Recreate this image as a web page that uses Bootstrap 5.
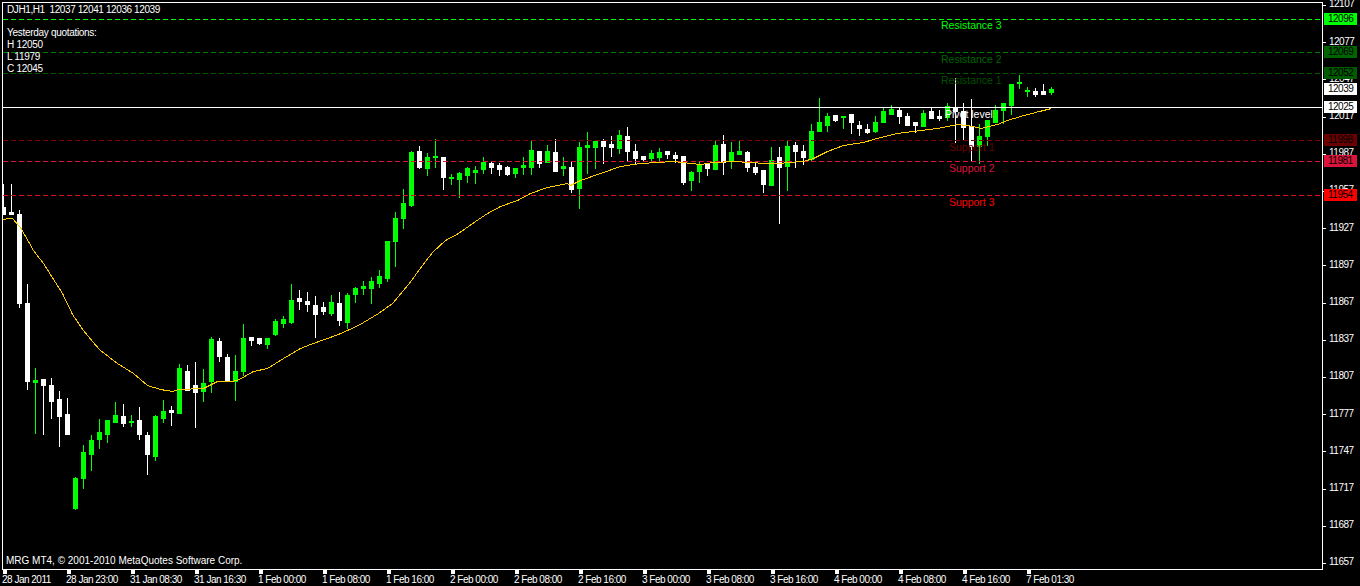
<!DOCTYPE html>
<html lang="en">
<head>
<meta charset="utf-8">
<title>DJH1,H1</title>
<link href="https://cdn.jsdelivr.net/npm/bootstrap@5.3.0/dist/css/bootstrap.min.css" rel="stylesheet">
<style>
html,body{background:#000;overflow:hidden}
body{font-family:"Liberation Sans",Arial,sans-serif;font-size:10px;line-height:12px;color:#fff}
.terminal{width:1360px;height:586px;padding:2px 0 0 2px}
.plot{width:1321px;height:568px;border:1px solid #fff;flex:none}
.plot svg{display:block;shape-rendering:crispEdges}
.plot text{font:10.5px "Liberation Sans",Arial,sans-serif;shape-rendering:auto}
.info{top:0;left:4px;letter-spacing:-.3px}
.info div{height:12px}
.info .title{margin-bottom:11px;margin-top:1px;white-space:pre;letter-spacing:-.4px}
.copy{left:3px;bottom:2px}
.price-axis{width:37px;height:568px;flex:none;letter-spacing:-.5px}
.price-axis .tick{left:0;width:3px;height:1px;background:#fff}
.price-axis .lab{left:6px;height:12px}
.price-axis .box{left:1px;width:33px;height:12px;padding-left:4px;color:#000}
.time-axis{height:16px;letter-spacing:-.5px}
.time-axis .cell{width:64px;flex:none;white-space:nowrap}
.time-axis .mark{width:1px;height:4px;background:#fff;margin-left:1px}
</style>
</head>
<body class="m-0">
<div class="terminal d-flex flex-column">
  <div class="d-flex">
    <div class="plot position-relative" id="plot">
      <div class="info position-absolute">
        <div class="title">DJH1,H1  12037 12041 12036 12039</div>
        <div>Yesterday quotations:</div>
        <div>H 12050</div>
        <div>L 11979</div>
        <div>C 12045</div>
      </div>
      <div class="copy position-absolute">MRG MT4, © 2001-2010 MetaQuotes Software Corp.</div>
    </div>
    <div class="price-axis position-relative" id="axis"></div>
  </div>
  <div class="time-axis d-flex" id="time"></div>
</div>
<script>
// [green?, high, bodyTop, bodyBottom, low]; bars every 8px from x=3
var bars=[
[0,184,207,214,214],[0,184,212,214,214],[0,210,214,303,307],[0,284,303,381,389],
[1,368,380,382,433],[0,379,379,385,434],[0,378,385,401,418],[0,391,399,416,446],[0,398,414,434,434],
[1,477,478,508,509],[1,445,452,478,488],[1,435,440,454,470],[1,419,432,439,448],[1,420,420,434,442],
[1,402,415,422,422],[0,404,416,423,426],[1,415,421,422,426],[0,407,420,434,439],[0,432,435,454,474],
[1,415,416,456,460],[1,400,411,418,422],[0,406,410,412,425],[1,364,368,413,413],[0,365,371,390,390],
[0,362,385,392,427],[1,369,383,391,401],[1,337,339,381,392],[0,338,341,356,361],[0,354,357,381,381],
[1,355,371,381,400],[1,324,338,371,375],[0,337,337,340,345],[0,338,338,343,344],[1,338,338,344,348],
[1,319,321,334,335],[1,316,319,323,327],[1,284,300,322,323],[0,290,298,301,309],[0,292,301,304,311],
[0,296,305,314,337],[0,302,307,311,314],[1,295,302,313,315],[0,292,303,320,325],[1,293,295,322,328],
[1,287,288,294,302],[1,281,286,288,294],[1,277,281,288,303],[1,270,276,283,287],[1,241,241,278,281],
[1,212,218,241,266],[1,189,203,218,228],[1,151,152,205,206],[0,146,151,167,168],[1,153,157,168,175],
[1,139,156,157,167],[0,157,157,177,189],[1,174,177,178,184],[1,172,173,179,197],[1,167,168,175,182],
[1,166,170,172,183],[1,157,162,169,173],[0,161,163,167,173],[0,163,165,169,175],[0,166,167,174,175],
[1,168,168,173,177],[1,157,165,167,174],[1,141,150,167,174],[0,151,151,163,167],[1,145,151,162,162],
[0,139,152,171,171],[1,157,166,168,175],[0,162,167,189,192],[1,142,147,188,208],[1,132,145,147,173],
[1,141,141,147,168],[0,139,141,146,163],[0,136,144,147,156],[1,130,135,148,153],[0,127,136,151,161],
[0,144,151,158,164],[0,156,156,159,161],[1,150,153,158,162],[1,148,152,157,162],[0,151,151,154,158],
[0,152,155,158,162],[0,156,156,182,184],[1,171,172,180,190],[1,162,165,171,182],[0,163,164,168,175],
[1,141,145,169,169],[0,135,144,162,174],[1,142,152,161,168],[1,141,151,154,154],[0,151,152,167,171],
[0,163,167,172,174],[0,170,170,184,192],[1,147,160,185,185],[0,147,157,167,223],[1,140,146,166,190],
[0,142,145,151,167],[0,145,151,157,164],[1,124,131,159,161],[1,98,122,131,131],[1,113,116,125,131],
[0,115,115,120,121],[1,116,116,117,128],[0,114,114,122,133],[0,121,125,128,135],[0,124,129,132,133],
[1,116,122,131,132],[1,108,111,122,122],[1,105,109,114,114],[0,108,110,116,123],[0,113,116,125,125],
[0,122,122,125,132],[1,110,113,126,126],[0,108,111,118,118],[0,110,116,118,120],[1,103,106,117,120],
[0,78,107,111,142],[0,103,111,127,140],[0,99,126,146,161],[1,124,136,146,163],[1,120,120,136,145],
[1,105,110,122,122],[1,103,103,110,123],[1,84,84,105,114],[1,75,82,83,88],[1,87,90,91,96],
[0,88,91,94,96],[0,84,91,94,94],[1,87,89,92,94]
];
var ma=[[3,219],[8,218],[12,218],[20,227],[33,250],[43,263],[62,293],[72,314],[83,330],[92,341],[100,350],[117,363],[133,373],[147,385],[160,389],[172,391],[178,389],[203,388],[217,381],[230,381],[237,380],[253,371],[267,368],[283,358],[300,348],[310,344],[327,338],[338,334],[358,325],[378,313],[392,303],[408,284],[422,265],[432,252],[445,240],[458,233],[475,221],[487,213],[500,206],[517,200],[530,193],[547,187],[567,183],[570,185],[580,180],[600,173],[620,166],[640,163],[673,161],[700,164],[713,162],[735,161],[747,162],[767,163],[780,163],[787,162],[803,161],[813,158],[827,151],[843,145],[863,142],[880,137],[897,133],[913,131],[937,128],[957,124],[973,126],[980,128],[997,124],[1007,120],[1020,116],[1035,112],[1051,108]];
var lines=[[19,'#00ff00'],[52,'#008000'],[73,'#005a00'],[140,'#800000'],[161,'#dc143c'],[195,'#e01020']];
var labels=[['Resistance 3',941,29,'#00ff00'],['Resistance 2',941,63,'#006400'],['Resistance 1',941,84,'#005000'],['Pivot level',945,118,'#ffffff'],['Support 1',949,151,'#6b0000'],['Support 2',949,172,'#dc143c'],['Support 3',949,206,'#ff0000']];
var s='<svg xmlns="http://www.w3.org/2000/svg" width="1319" height="566" viewBox="3 3 1319 566">';
bars.forEach(function(b,i){
  var x=3+8*i,c=b[0]?'#00ff00':'#ffffff';
  s+='<rect x="'+x+'" y="'+b[1]+'" width="1" height="'+(b[4]-b[1]+1)+'" fill="'+c+'"/>';
  s+='<rect x="'+(x-2)+'" y="'+b[2]+'" width="5" height="'+(b[3]-b[2]+1)+'" fill="'+c+'"/>';
});
lines.forEach(function(l){s+='<line x1="3" x2="1322" y1="'+(l[0]+.5)+'" y2="'+(l[0]+.5)+'" stroke="'+l[1]+'" stroke-dasharray="5 3"/>';});
s+='<line x1="3" x2="1322" y1="107.5" y2="107.5" stroke="#fff"/>';
s+='<polyline fill="none" stroke="#ffcc00" points="'+ma.map(function(p){return (p[0]+.5)+','+(p[1]+.5)}).join(' ')+'"/>';
labels.forEach(function(l){s+='<text x="'+l[1]+'" y="'+l[2]+'" fill="'+l[3]+'">'+l[0]+'</text>';});
s+='</svg>';
document.getElementById('plot').insertAdjacentHTML('afterbegin',s);

var a='';
// axis coordinates are relative to y=2 (top of the column)
for(var k=0;k<16;k++){
  var y=563-37.2*k;
  a+='<div class="tick position-absolute" style="top:'+Math.round(y-2)+'px"></div>';
  a+='<div class="lab position-absolute" style="top:'+Math.round(y-8.6)+'px">'+(11657+30*k)+'</div>';
}
[[13,'12096','#00ff00'],[46,'12069','#006400'],[67,'12052','#005a00'],[83,'12039','#ffffff'],[101,'12025','#ffffff'],[134,'11998','#6b0000'],[155,'11981','#dc143c'],[189,'11954','#ff0000']].forEach(function(b){
  a+='<div class="box position-absolute" style="top:'+(b[0]-2)+'px;background:'+b[2]+'">'+b[1]+'</div>';
});
document.getElementById('axis').innerHTML=a;

document.getElementById('time').innerHTML=['28 Jan 2011','28 Jan 23:00','31 Jan 08:30','31 Jan 16:30','1 Feb 00:00','1 Feb 08:00','1 Feb 16:00','2 Feb 00:00','2 Feb 08:00','2 Feb 16:00','3 Feb 00:00','3 Feb 08:00','3 Feb 16:00','4 Feb 00:00','4 Feb 08:00','4 Feb 16:00','7 Feb 01:30'].map(function(t){
  return '<div class="cell"><div class="mark"></div><div class="txt">'+t+'</div></div>';
}).join('');
</script>
<script src="https://cdn.jsdelivr.net/npm/bootstrap@5.3.0/dist/js/bootstrap.bundle.min.js"></script>
</body>
</html>
